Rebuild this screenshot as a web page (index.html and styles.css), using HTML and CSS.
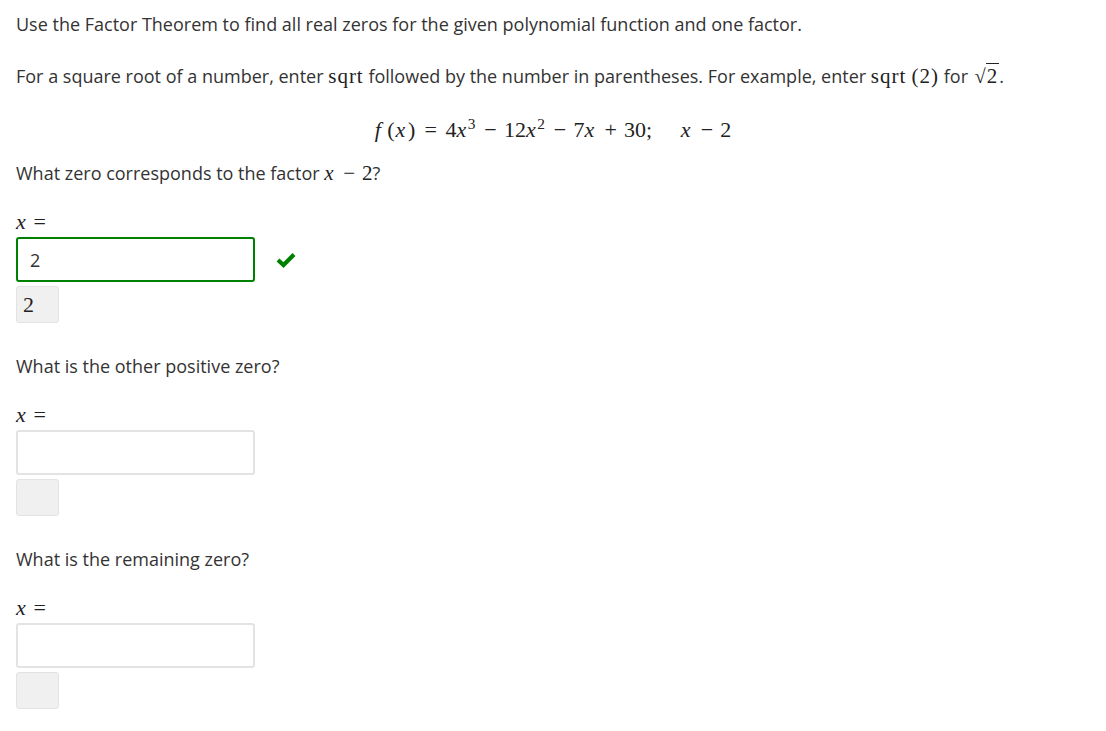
FILE: index.html
```html
<!DOCTYPE html>
<html lang="en">
<head>
    <meta charset="UTF-8">
    <title>Factor Theorem</title>
    <link rel="stylesheet" href="styles.css">
</head>
<body>
    <div class="question">
        <p class="intro">Use the Factor Theorem to find all real zeros for the given polynomial function and one factor.</p>
        <p class="hint">For a square root of a number, enter <span class="math"><span class="rm">sqrt</span></span> followed by the number in parentheses. For example, enter <span class="math"><span class="rm">sqrt</span><span class="op-sp">(2)</span></span> for <span class="math"><span class="sqrt">√</span><span class="radicand">2</span></span>.</p>

        <div class="formula math">
            <i class="fn">f</i><span class="sp">(<i>x</i>)</span><span class="rel">=</span>4<i>x</i><sup>3</sup><span class="bin">−</span>12<i>x</i><sup>2</sup><span class="bin">−</span>7<i>x</i><span class="bin">+</span>30;<span class="quad"><i>x</i></span><span class="bin">−</span>2
        </div>

        <!-- part 1 -->
        <div class="part">
            <p class="prompt">What zero corresponds to the factor <span class="math"><i>x</i><span class="bin">−</span>2</span>?</p>
            <div class="label math"><i>x</i><span class="rel">=</span></div>
            <div class="answer-row">
                <input type="text" class="answer correct" value="2">
                <svg class="check" width="20" height="16" viewBox="0 0 20 16">
                    <path d="M2 8 L7.5 13 L18 2.5" fill="none" stroke="#008000" stroke-width="4.2"/>
                </svg>
            </div>
            <div class="preview math">2</div>
        </div>

        <!-- part 2 -->
        <div class="part">
            <p class="prompt">What is the other positive zero?</p>
            <div class="label math"><i>x</i><span class="rel">=</span></div>
            <div class="answer-row">
                <input type="text" class="answer">
            </div>
            <div class="preview math"></div>
        </div>

        <!-- part 3 -->
        <div class="part">
            <p class="prompt">What is the remaining zero?</p>
            <div class="label math"><i>x</i><span class="rel">=</span></div>
            <div class="answer-row">
                <input type="text" class="answer">
            </div>
            <div class="preview math"></div>
        </div>
    </div>
</body>
</html>
```

FILE: styles.css
```css
body {
    margin: 0;
    padding: 0;
    font-family: "Open Sans", "Liberation Sans", sans-serif;
    font-size: 18px;
    color: #333;
    background-color: #fff;
}

.question {
    padding: 12px 16px 0;
}

p {
    margin: 0;
    line-height: 24px;
}

.intro {
    margin-bottom: 28px;
}

/* math bits (serif stands in for the TeX font) */
.math {
    font-family: "Liberation Serif", "DejaVu Serif", serif;
    font-size: 22px;
    color: #222;
}

p .math {
    font-size: 21px;
    line-height: 0;
}

.math i {
    font-style: italic;
    letter-spacing: 0.13em;
}

.math i.fn {
    letter-spacing: 0;
    margin-right: 0.12em;
}

.math sup {
    font-size: 0.7em;
    line-height: 0;
    vertical-align: 0;
    position: relative;
    top: -0.55em;
    margin-left: -0.08em;
    margin-right: 0.1em;
}

.rm {
    letter-spacing: 1px;
}

.op-sp {
    margin-left: 0.25em;
    letter-spacing: 1px;
}

.sqrt {
    font-size: 0.95em;
    margin-left: 2px;
}

.radicand {
    border-top: 1px solid #222;
    padding: 0 2px 0 1px;
}

.sp {
    margin-left: 0.17em;
    letter-spacing: 0.04em;
}

.rel {
    margin: 0 0.38em;
}

.bin {
    margin: 0 0.33em;
}

.quad {
    margin-left: 1.3em;
}

.formula {
    text-align: center;
    line-height: 24px;
    margin-top: 30px;
}

/* answer parts */
.part {
    margin-top: 19px;
}

.part + .part {
    margin-top: 31px;
}

.label {
    line-height: 20px;
    margin-top: 27px;
}

.label .rel {
    margin-left: 0.22em;
}

.answer-row {
    display: flex;
    align-items: center;
    gap: 21px;
    margin-top: 5px;
}

.answer {
    width: 239px;
    height: 45px;
    box-sizing: border-box;
    padding: 0 12px;
    border: 2px solid #e3e3e3;
    border-radius: 3px;
    font-family: "Open Sans", "Liberation Sans", sans-serif;
    font-size: 18px;
    color: #333;
    background-color: #fff;
    outline: none;
}

.answer.correct {
    border-color: #008000;
}

.check {
    display: block;
}

.preview {
    width: 43px;
    height: 37px;
    box-sizing: border-box;
    margin-top: 4px;
    padding-left: 6px;
    line-height: 35px;
    background-color: #f0f0f0;
    border: 1px solid #e3e3e3;
    border-radius: 3px;
}
```
